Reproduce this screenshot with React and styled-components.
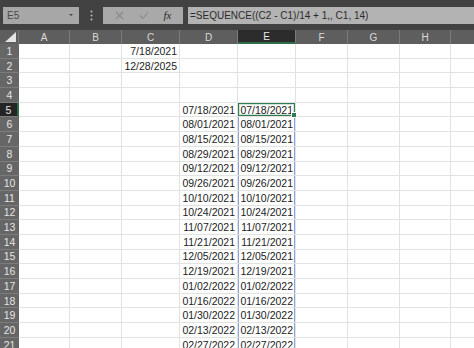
import React from "react";
import styled, { createGlobalStyle } from "styled-components";

const Global = createGlobalStyle`
body {
  margin : 0;
  background : #ffffff;
  font-family : "Liberation Sans", Arial, sans-serif;
}
`

const Sheet = styled.div`
width : 474px;
height : 348px;
overflow : hidden;
background : #ffffff;
`

const TopBar = styled.div`
height : 30px;
background : #424242;
display : flex;
align-items : center;
padding-left : 3px;
box-sizing : border-box;
`

const NameBox = styled.div`
width : 76px;
height : 17px;
background : #a7a7a7;
display : flex;
align-items : center;
justify-content : space-between;
padding : 0 6px 0 4px;
box-sizing : border-box;
font-size : 10px;
color : #4a4a4a;
`

const Caret = styled.div`
width : 0;
height : 0;
border-left : 2px solid transparent;
border-right : 2px solid transparent;
border-top : 2px solid #444444;
`

const Dots = styled.div`
width : 24px;
display : flex;
justify-content : center;
`

const FxGroup = styled.div`
width : 80px;
height : 17px;
background : #a9a9a9;
display : flex;
align-items : center;
justify-content : space-around;
padding : 0 4px;
box-sizing : border-box;
`

const Fx = styled.span`
font-family : "Liberation Serif", "Times New Roman", serif;
font-style : italic;
font-size : 11px;
color : #2a2a2a;
`

const Formula = styled.div`
flex : 1;
height : 17px;
margin-left : 5px;
background : #b3b3b3;
display : flex;
align-items : center;
padding-left : 2px;
font-size : 10px;
color : #2b2b2b;
white-space : nowrap;
`

const Row = styled.div`
display : flex;
height : ${props => props.h}px;
`

const Corner = styled.div`
width : 19px;
flex : none;
background : #5e5e5e;
position : relative;
border-right : 1px solid #777777;
box-sizing : border-box;
&::after {
  content : "";
  position : absolute;
  right : 2px;
  bottom : 2px;
  border-left : 11px solid transparent;
  border-bottom : 10px solid #e4e4e4;
}
`

const ColHead = styled.div`
width : ${props => props.w}px;
flex : none;
background : ${props => props.active ? "#2c2c2c" : "#5e5e5e"};
color : ${props => props.active ? "#e8e8e8" : "#dadada"};
border-right : 1px solid #7a7a7a;
border-bottom : ${props => props.active ? "2px solid #2f6b49" : "none"};
box-sizing : border-box;
font-size : 10px;
display : flex;
align-items : center;
justify-content : center;
`

const RowHead = styled.div`
width : 19px;
flex : none;
background : ${props => props.active ? "#242424" : "#666666"};
color : #e4e4e4;
border-bottom : 1px solid #7c7c7c;
border-right : ${props => props.active ? "2px solid #2f6b49" : "none"};
box-sizing : border-box;
font-size : 10.5px;
display : flex;
align-items : center;
justify-content : center;
`

const Cell = styled.div`
width : ${props => props.w}px;
flex : none;
position : relative;
border-right : 1px solid #e2e2e2;
border-bottom : 1px solid #e2e2e2;
box-sizing : border-box;
font-size : 10.5px;
color : #1c1c1c;
display : flex;
align-items : center;
justify-content : flex-end;
padding-right : 2px;
white-space : nowrap;
box-shadow : ${props => props.spill ? "inset 1px 0 0 #8ea3d6, inset -1px 0 0 #8ea3d6" : "none"};
${props => props.selected && `
  box-shadow : inset 0 0 0 1px #2f7a52, inset 0 0 0 2px #cfe3d6;
  &::after {
    content : "";
    position : absolute;
    right : -2px;
    bottom : -2px;
    width : 4px;
    height : 4px;
    background : #2f7a52;
    border : 1px solid #ffffff;
    z-index : 2;
  }
`}
`

const columns = [
  { name: "A", w: 51 },
  { name: "B", w: 52 },
  { name: "C", w: 58 },
  { name: "D", w: 58 },
  { name: "E", w: 58 },
  { name: "F", w: 52 },
  { name: "G", w: 52 },
  { name: "H", w: 51 },
  { name: "I", w: 56 },
];

function fmt(d) {
  const mm = String(d.getMonth() + 1).padStart(2, "0");
  const dd = String(d.getDate()).padStart(2, "0");
  return `${mm}/${dd}/${d.getFullYear()}`;
}

const start = new Date(2021, 6, 18);
const dates = [...Array(17)].map((e, i) => {
  const d = new Date(start);
  d.setDate(d.getDate() + i * 14);
  return fmt(d);
});

function cellValue(row, col) {
  if (col === "C" && row === 1) return "7/18/2021";
  if (col === "C" && row === 2) return "12/28/2025";
  if ((col === "D" || col === "E") && row >= 5) return dates[row - 5];
  return "";
}

function XIcon() {
  return (
    <svg width="9" height="9" viewBox="0 0 9 9">
      <path d="M1 1 L8 8 M8 1 L1 8" stroke="#8a8a8a" strokeWidth="1.1" fill="none" />
    </svg>
  );
}

function CheckIcon() {
  return (
    <svg width="10" height="9" viewBox="0 0 10 9">
      <path d="M1 4.5 L3.8 7.5 L9 1.5" stroke="#8a8a8a" strokeWidth="1.1" fill="none" />
    </svg>
  );
}

function DotsIcon() {
  return (
    <svg width="3" height="11" viewBox="0 0 3 11">
      <circle cx="1.5" cy="1.5" r="1" fill="#bdbdbd" />
      <circle cx="1.5" cy="5.5" r="1" fill="#bdbdbd" />
      <circle cx="1.5" cy="9.5" r="1" fill="#bdbdbd" />
    </svg>
  );
}

export default function App() {
  const rows = [...Array(21)].map((e, i) => i + 1);

  return (
    <Sheet>
      <Global />
      <TopBar>
        <NameBox>
          E5
          <Caret />
        </NameBox>
        <Dots><DotsIcon /></Dots>
        <FxGroup>
          <XIcon />
          <CheckIcon />
          <Fx>fx</Fx>
        </FxGroup>
        <Formula>=SEQUENCE((C2 - C1)/14 + 1,, C1, 14)</Formula>
      </TopBar>
      <Row h={14}>
        <Corner />
        {columns.map(c => (
          <ColHead key={c.name} w={c.w} active={c.name === "E"}>{c.name === "I" ? "" : c.name}</ColHead>
        ))}
      </Row>
      {rows.map(r => (
        <Row key={r} h={14.7}>
          <RowHead active={r === 5}>{r}</RowHead>
          {columns.map(c => (
            <Cell
              key={c.name}
              w={c.w}
              selected={c.name === "E" && r === 5}
              spill={c.name === "E" && r > 5}
            >
              {cellValue(r, c.name)}
            </Cell>
          ))}
        </Row>
      ))}
    </Sheet>
  );
}
